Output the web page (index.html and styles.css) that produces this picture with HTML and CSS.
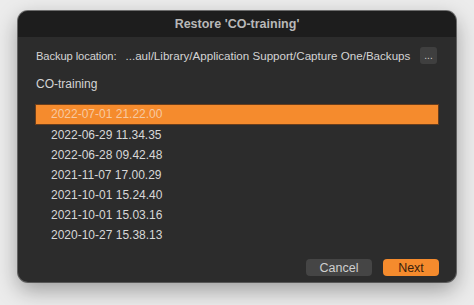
FILE: index.html
```html
<!DOCTYPE html>
<html>
<head>
<meta charset="utf-8">
<link rel="stylesheet" href="styles.css">
</head>
<body>
<div class="window">
  <div class="titlebar">Restore 'CO-training'</div>
  <div class="content">
    <div class="location">
      <span class="label">Backup location:</span>
      <span class="path">...aul/Library/Application Support/Capture One/Backups</span>
      <span class="browse">...</span>
    </div>
    <div class="catalog">CO-training</div>
    <div class="list">
      <div class="row selected">2022-07-01 21.22.00</div>
      <div class="row">2022-06-29 11.34.35</div>
      <div class="row">2022-06-28 09.42.48</div>
      <div class="row">2021-11-07 17.00.29</div>
      <div class="row">2021-10-01 15.24.40</div>
      <div class="row">2021-10-01 15.03.16</div>
      <div class="row">2020-10-27 15.38.13</div>
    </div>
    <div class="buttons">
      <div class="btn cancel">Cancel</div>
      <div class="btn next">Next</div>
    </div>
  </div>
</div>
</body>
</html>
```
FILE: styles.css
```css
html, body {
  margin: 0;
  padding: 0;
  background: #ececec;
  width: 474px;
  height: 305px;
  overflow: hidden;
  font-family: "Liberation Sans", Arial, sans-serif;
}
.window {
  margin: 11px 0 0 18px;
  width: 438px;
  height: 271px;
  border-radius: 10px;
  background: #2c2c2c;
  overflow: hidden;
  box-shadow: 0 8px 22px rgba(0,0,0,0.35), 0 0 0 1px rgba(0,0,0,0.5);
  display: flex;
  flex-direction: column;
}
.titlebar {
  height: 26px;
  flex-shrink: 0;
  background: #1d1d1d;
  color: #b8b8b8;
  font-weight: bold;
  font-size: 12.5px;
  display: flex;
  align-items: center;
  justify-content: center;
}
.content {
  flex: 1;
  display: flex;
  flex-direction: column;
  padding: 0 18px 0 18px;
  color: #d4d4d4;
  font-size: 12px;
}
.location {
  display: flex;
  align-items: center;
  height: 17px;
  margin-top: 10px;
  white-space: nowrap;
}
.label {
  margin-right: 9px;
  flex-shrink: 0;
  font-size: 11.2px;
  letter-spacing: -0.1px;
}
.path {
  flex: 1;
  overflow: hidden;
  font-size: 11.6px;
}
.browse {
  flex-shrink: 0;
  width: 17px;
  height: 17px;
  background: #3f3f3f;
  border-radius: 3px;
  color: #cfcfcf;
  font-size: 10px;
  display: flex;
  align-items: center;
  justify-content: center;
  margin-right: 1px;
}
.catalog {
  margin-top: 11px;
  height: 18px;
  line-height: 18px;
}
.list {
  margin-top: 12px;
  display: flex;
  flex-direction: column;
}
.row {
  height: 20px;
  line-height: 20px;
  padding-left: 15px;
  color: #d8d8d8;
}
.row.selected {
  background: #f58b2d;
  color: #f7c9a0;
  height: 19px;
  line-height: 19px;
  margin-bottom: 1px;
  box-shadow: 0 0 0 1px #6a3e1c;
}
.buttons {
  margin-top: auto;
  margin-bottom: 6px;
  display: flex;
  justify-content: flex-end;
  gap: 11px;
  margin-right: -1px;
}
.btn {
  height: 17px;
  border-radius: 4px;
  display: flex;
  align-items: center;
  justify-content: center;
  font-size: 12.5px;
}
.cancel {
  width: 66px;
  background: #454545;
  color: #cfcfcf;
}
.next {
  width: 56px;
  background: #f58b2d;
  color: #3a220c;
}
```
